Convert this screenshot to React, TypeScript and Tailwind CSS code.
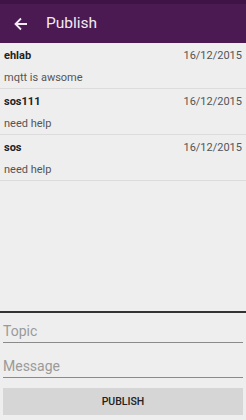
import React from 'react';

const messages = [
  { user: 'ehlab', date: '16/12/2015', text: 'mqtt is awsome' },
  { user: 'sos111', date: '16/12/2015', text: 'need help' },
  { user: 'sos', date: '16/12/2015', text: 'need help' },
];

const App = () => {
  return (
    <div
      className="flex h-[420px] w-[246px] flex-col overflow-hidden bg-[#eeeeee]"
      style={{ fontFamily: 'Roboto, "Liberation Sans", sans-serif' }}
    >
      {/* status bar + toolbar */}
      <div className="h-[4px] bg-[#3f1345]" />
      <div className="flex h-[39px] items-center bg-[#4b1a52]">
        <svg className="ml-[14px] h-[14px] w-[14px]" viewBox="0 0 14 14" fill="none" stroke="#f3eaf3" strokeWidth={1.8}>
          <path d="M13 7H1.5M7 1.5L1.5 7L7 12.5" />
        </svg>
        <span className="ml-[18px] text-[15.5px] leading-none text-[#f3eaf3]">Publish</span>
      </div>

      {/* message list */}
      <div className="flex-1">
        {messages.map((m, i) => (
          <div key={i} className="border-b border-[#dcdcdc] px-[4px] pt-[6px] pb-[3px]">
            <div className="flex justify-between text-[11px] leading-[14px]">
              <span className="font-bold text-[#222]">{m.user}</span>
              <span className="text-[#555]">{m.date}</span>
            </div>
            <div className="mt-[8px] text-[11px] leading-[14px] text-[#555]">{m.text}</div>
          </div>
        ))}
      </div>

      {/* form */}
      <div className="border-t-2 border-[#333] px-[3px]">
        <input
          placeholder="Topic"
          className="block h-[30px] w-full border-b border-[#8a8a8a] bg-transparent pt-[6px] text-[14px] leading-[22px] outline-none placeholder:text-[#9a9a9a]"
        />
        <input
          placeholder="Message"
          className="block h-[35px] w-full border-b border-[#8a8a8a] bg-transparent pt-[12px] text-[14px] leading-[22px] outline-none placeholder:text-[#9a9a9a]"
        />
        <button className="mt-[10px] mb-[5px] flex h-[27px] w-full items-center justify-center bg-[#d6d6d6] text-[10.5px] font-medium text-[#222]">
          PUBLISH
        </button>
      </div>
    </div>
  );
};

export default App;
